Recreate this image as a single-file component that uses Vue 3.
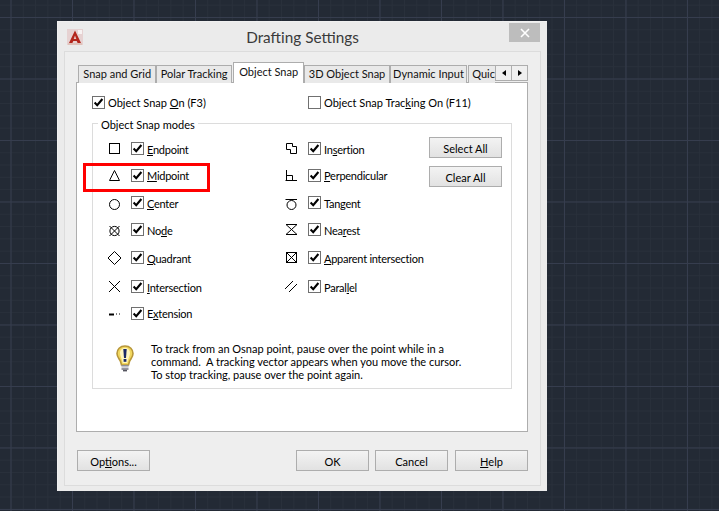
<script setup>
const tabs = [
  { label: 'Snap and Grid', width: 79 },
  { label: 'Polar Tracking', width: 76 },
  { label: 'Object Snap', width: 72, active: true },
  { label: '3D Object Snap', width: 86 },
  { label: 'Dynamic Input', width: 78 },
  { label: 'Quick', width: 27, clipped: true }
]

const modes = [
  { icon: 'endpoint', pre: '', key: 'E', post: 'ndpoint' },
  { icon: 'midpoint', pre: '', key: 'M', post: 'idpoint' },
  { icon: 'center', pre: '', key: 'C', post: 'enter' },
  { icon: 'node', pre: 'No', key: 'd', post: 'e' },
  { icon: 'quadrant', pre: '', key: 'Q', post: 'uadrant' },
  { icon: 'intersection', pre: '', key: 'I', post: 'ntersection' },
  { icon: 'extension', pre: 'E', key: 'x', post: 'tension' },
  { icon: 'insertion', pre: 'In', key: 's', post: 'ertion' },
  { icon: 'perpendicular', pre: '', key: 'P', post: 'erpendicular' },
  { icon: 'tangent', pre: 'Tan', key: 'g', post: 'ent' },
  { icon: 'nearest', pre: 'Nea', key: 'r', post: 'est' },
  { icon: 'apparent', pre: '', key: 'A', post: 'pparent intersection' },
  { icon: 'parallel', pre: 'Paral', key: 'l', post: 'el' }
]

const hintLines = [
  'To track from an Osnap point, pause over the point while in a',
  'command.  A tracking vector appears when you move the cursor.',
  'To stop tracking, pause over the point again.'
]
</script>

<template>
  <div class="desk">
    <div class="dialog">
      <header class="titlebar">
        <svg class="logo" width="16" height="16" viewBox="0 0 16 16">
          <rect width="16" height="16" fill="#e6d2d2" />
          <path d="M11 1h4v4h-4z" fill="#f7f2f2" />
          <path d="M8 1.5 L14 14 H10.6 L9.7 12 H6.3 L5.4 14 H2 Z" fill="#b3261c" />
          <path d="M8 6.5 L9.3 10 H6.7 Z" fill="#e6c8c4" />
          <path d="M1 14.5h14v1H1z" fill="#d8b0a0" />
        </svg>
        <h1 class="title">Drafting Settings</h1>
        <button class="close" aria-label="Close">
          <svg width="10" height="10" viewBox="0 0 10 10">
            <path d="M1 1 L9 9 M9 1 L1 9" stroke="#fff" stroke-width="1.6" fill="none" />
          </svg>
        </button>
      </header>

      <div class="client">
        <div class="tabstrip">
          <div
            v-for="tab in tabs"
            :key="tab.label"
            class="tab"
            :class="{ active: tab.active, clipped: tab.clipped }"
            :style="{ width: tab.width + 'px' }"
          >{{ tab.label }}</div>
          <div class="arrows">
            <span class="arrow"><i class="tri left"></i></span>
            <span class="arrow"><i class="tri right"></i></span>
          </div>
        </div>

        <section class="panel">
          <div class="toprow">
            <label class="check-line first">
              <span class="box"><svg width="11" height="11" viewBox="0 0 11 11"><path d="M1.6 5.6 L4.2 8.2 L9.4 2" stroke="#000" stroke-width="2.1" fill="none" /></svg></span>
              <span class="lbl">Object Snap <u>O</u>n (F3)</span>
            </label>
            <label class="check-line">
              <span class="box"></span>
              <span class="lbl">Object Snap Trac<u>k</u>ing On (F11)</span>
            </label>
          </div>

          <div class="group">
            <div class="legend">Object Snap modes</div>
            <div class="group-body">
              <div class="modes">
                <div v-for="m in modes" :key="m.icon" class="mode">
                  <svg class="ico" width="18" height="18" viewBox="0 0 18 18" fill="none" stroke="#000" stroke-width="1">
                    <rect v-if="m.icon === 'endpoint'" x="4.5" y="3.5" width="10" height="10" />
                    <path v-else-if="m.icon === 'midpoint'" d="M9.5 3.5 L14.5 13.5 H4.5 Z" />
                    <circle v-else-if="m.icon === 'center'" cx="9.5" cy="10.5" r="5" />
                    <g v-else-if="m.icon === 'node'">
                      <circle cx="9.5" cy="10" r="4.6" />
                      <path d="M4.5 5 L14.5 15 M14.5 5 L4.5 15" />
                    </g>
                    <path v-else-if="m.icon === 'quadrant'" d="M9.5 2.5 L16 9 L9.5 15.5 L3 9 Z" />
                    <path v-else-if="m.icon === 'intersection'" d="M4 3 L15 14 M15 3 L4 14" />
                    <g v-else-if="m.icon === 'extension'">
                      <path d="M4 9.5 H9" stroke-width="2" />
                      <path d="M11 9 h1 M14 9 h1" />
                    </g>
                    <path v-else-if="m.icon === 'insertion'" d="M4.5 3.5 H10.5 V6.5 H14.5 V13.5 H8.5 V9.5 H4.5 Z" />
                    <path v-else-if="m.icon === 'perpendicular'" d="M4.5 3 V13.5 M3.5 13.5 H15 M4.5 8.5 H10.5 V13.5" />
                    <g v-else-if="m.icon === 'tangent'">
                      <path d="M3.5 5.5 H15" />
                      <circle cx="9.5" cy="11" r="4.5" />
                    </g>
                    <path v-else-if="m.icon === 'nearest'" d="M4 3.5 H15 L4 13.5 H15 Z" />
                    <g v-else-if="m.icon === 'apparent'">
                      <rect x="4.5" y="3.5" width="10" height="10" />
                      <path d="M4.5 3.5 L14.5 13.5 M14.5 3.5 L4.5 13.5" />
                    </g>
                    <path v-else-if="m.icon === 'parallel'" d="M3 11 L11 3 M7 14 L15 6" />
                  </svg>
                  <span class="box"><svg width="11" height="11" viewBox="0 0 11 11"><path d="M1.6 5.6 L4.2 8.2 L9.4 2" stroke="#000" stroke-width="2.1" fill="none" /></svg></span>
                  <span class="lbl">{{ m.pre }}<u>{{ m.key }}</u>{{ m.post }}</span>
                </div>
              </div>
              <div class="side">
                <button class="btn">Select All</button>
                <button class="btn">Clear All</button>
              </div>
            </div>

            <div class="hint">
              <svg class="bulb" width="18" height="28" viewBox="0 0 18 28">
                <path d="M9 1 C4 1 1 4.5 1 8.5 C1 12 3.5 14 4.5 16.5 L5.5 20 H12.5 L13.5 16.5 C14.5 14 17 12 17 8.5 C17 4.5 14 1 9 1 Z" fill="#f2d860" stroke="#b8973a" stroke-width="1.6" />
                <path d="M4 8 C4 5 6.2 3 9 3 C11.8 3 14 5 14 8 C14 11 11.8 14 11.2 18 H6.8 C6.2 14 4 11 4 8 Z" fill="#fff6c0" />
                <path d="M7.3 4 H10.7 L10 13 H8 Z" fill="#1b2a66" />
                <rect x="7.6" y="14" width="2.8" height="2.8" fill="#1b2a66" />
                <rect x="5.5" y="20" width="7" height="1.6" fill="#8f8f98" />
                <rect x="5.5" y="21.6" width="7" height="1.6" fill="#d2d2d8" />
                <rect x="5.5" y="23.2" width="7" height="1.6" fill="#7d7d88" />
                <rect x="7" y="24.8" width="4" height="1.6" fill="#55555f" />
              </svg>
              <div class="hint-text">
                <div v-for="line in hintLines" :key="line" class="hint-line">{{ line }}</div>
              </div>
            </div>
          </div>
        </section>

        <footer class="footer">
          <button class="btn">Op<u>t</u>ions...</button>
          <button class="btn ok">OK</button>
          <button class="btn cancel">Cancel</button>
          <button class="btn help"><u>H</u>elp</button>
        </footer>
      </div>
    </div>
    <div class="callout"></div>
  </div>
</template>

<style scoped>
.desk {
  position: relative;
  width: 719px;
  height: 511px;
  overflow: hidden;
  background-color: #232a35;
  background-image:
    linear-gradient(to right, #363d4e 1px, transparent 1px),
    linear-gradient(to bottom, #363d4e 1px, transparent 1px),
    linear-gradient(to right, #29303b 1px, transparent 1px),
    linear-gradient(to bottom, #29303b 1px, transparent 1px);
  background-size: 61.5px 61.5px, 61.5px 61.5px, 12.3px 12.3px, 12.3px 12.3px;
  background-position: 10.5px 17px, 10.5px 17px, 10.5px 17px, 10.5px 17px;
  font-family: "Lato", "Open Sans", sans-serif;
  font-size: 11px;
  color: #000;
}
.dialog {
  position: absolute;
  left: 57px;
  top: 21px;
  width: 490px;
  height: 470px;
  box-sizing: border-box;
  display: flex;
  flex-direction: column;
  background: #ebebeb;
  border: 1px solid #f0f0f0;
  border-width: 1px 0 0 1px;
}
.titlebar {
  position: relative;
  height: 29px;
  flex: none;
  display: flex;
  align-items: flex-start;
  justify-content: center;
}
.logo {
  position: absolute;
  left: 9px;
  top: 7px;
}
.title {
  margin: 5px 0 0 0;
  font-size: 15.3px;
  line-height: 20px;
  font-weight: 400;
  color: #3a3a3a;
}
.close {
  position: absolute;
  right: 7px;
  top: 1px;
  width: 31px;
  height: 19px;
  padding: 0;
  border: 0;
  background: #bdbdbd;
  display: flex;
  align-items: center;
  justify-content: center;
}
.client {
  flex: 1;
  margin: 0 6px 5px 6px;
  border: 1px solid #dcdcdc;
  background: #eee;
  padding: 11px 0 0 11px;
  display: flex;
  flex-direction: column;
}
.tabstrip {
  display: flex;
  height: 20px;
  width: 452px;
  padding-left: 2px;
  box-sizing: border-box;
  align-items: flex-end;
  position: relative;
  z-index: 1;
  margin-bottom: -1px;
}
.tab {
  height: 18px;
  box-sizing: border-box;
  border: 1px solid #adadad;
  border-bottom: 0;
  background: #e9e9e9;
  text-align: center;
  line-height: 15px;
  white-space: nowrap;
  overflow: hidden;
  margin-right: 0;
  color: #111;
}
.tab.active {
  height: 21px;
  background: #fff;
  line-height: 17px;
  margin-left: 1px;
  position: relative;
  z-index: 2;
}
.tab.clipped {
  border-right: 0;
  text-align: left;
  padding-left: 3px;
  margin-left: 1px;
}
.arrows {
  display: flex;
  align-self: flex-start;
  margin-top: 2px;
  height: 16px;
  border: 1px solid #adadad;
  background: #efefef;
  box-sizing: border-box;
}
.arrow {
  width: 15px;
  display: flex;
  align-items: center;
  justify-content: center;
}
.arrow:first-child {
  border-right: 1px solid #adadad;
}
.tri {
  width: 0;
  height: 0;
  border-top: 3.5px solid transparent;
  border-bottom: 3.5px solid transparent;
}
.tri.left {
  border-right: 4px solid #000;
}
.tri.right {
  border-left: 4px solid #000;
}
.panel {
  width: 452px;
  height: 350px;
  flex: none;
  box-sizing: border-box;
  border: 1px solid #adadad;
  background: #fff;
  padding: 12px 0 0 15px;
}
.toprow {
  display: flex;
  height: 14px;
  margin-bottom: 14px;
}
.check-line {
  display: flex;
  align-items: center;
}
.check-line.first {
  width: 216px;
}
.box {
  flex: none;
  width: 13px;
  height: 13px;
  box-sizing: border-box;
  border: 1px solid #707070;
  background: #fff;
  display: flex;
  align-items: center;
  justify-content: center;
}
.lbl {
  margin-left: 3px;
  white-space: nowrap;
}
.group {
  position: relative;
  width: 420px;
  height: 266px;
  box-sizing: border-box;
  border: 1px solid #dcdcdc;
}
.legend {
  position: absolute;
  left: 5px;
  top: -7px;
  padding: 0 3px;
  background: #fff;
  line-height: 15px;
}
.group-body {
  display: flex;
  padding: 11px 0 0 12px;
}
.modes {
  display: grid;
  grid-template-rows: 27px 27px 27px 27px 29px 29px 25px;
  grid-template-columns: 177px 147px;
  grid-auto-flow: column;
}
.mode {
  display: flex;
  align-items: center;
}
.mode .lbl {
  padding-top: 2px;
  letter-spacing: -0.25px;
}
.mode:nth-child(2) .lbl,
.mode:nth-child(7) .lbl,
.mode:nth-child(9) .lbl {
  padding-top: 0;
}
.ico {
  flex: none;
  margin-right: 8px;
}
.side {
  display: flex;
  flex-direction: column;
  gap: 8px;
  padding-top: 2px;
}
.btn {
  width: 73px;
  height: 21px;
  box-sizing: border-box;
  padding: 2px 0 0;
  border: 1px solid #adadad;
  background: linear-gradient(to bottom, #f3f3f3, #e2e2e2);
  font: inherit;
  color: #000;
  flex: none;
}
.hint {
  display: flex;
  align-items: flex-start;
  margin: 15px 0 0 23px;
}
.bulb {
  flex: none;
  margin-top: 4px;
  margin-right: 17px;
}
.hint-text {
  line-height: 13px;
  padding-top: 1px;
}
.hint-line {
  white-space: pre;
}
.footer {
  display: flex;
  width: 452px;
  margin-top: 18px;
  padding-left: 1px;
  box-sizing: border-box;
}
.ok {
  margin-left: 146px;
}
.cancel {
  margin-left: 6px;
}
.help {
  margin-left: 7px;
}
.callout {
  position: absolute;
  left: 83px;
  top: 163px;
  width: 127px;
  height: 29px;
  box-sizing: border-box;
  border: 3px solid #f00;
}
</style>
